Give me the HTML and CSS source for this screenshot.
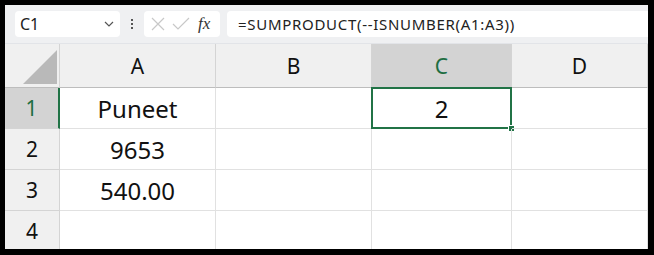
FILE: index.html
```html
<!DOCTYPE html>
<html lang="en">
<head>
    <meta charset="UTF-8">
    <title>Sheet - SUMPRODUCT</title>
    <link rel="stylesheet" href="styles.css">
</head>
<body>

    <div class="frame">

        <!-- Formula bar -->
        <div class="formula-bar">
            <div class="name-box">
                <span>C1</span>
                <svg class="chevron" width="10" height="6" viewBox="0 0 10 6"><path d="M1 1 L5 5 L9 1" fill="none" stroke="#555" stroke-width="1.2"/></svg>
            </div>
            <div class="grip">
                <span></span><span></span><span></span>
            </div>
            <div class="fx-box">
                <svg width="16" height="16" viewBox="0 0 16 16"><path d="M2 2 L14 14 M14 2 L2 14" stroke="#c8c8c8" stroke-width="1.2"/></svg>
                <svg width="18" height="16" viewBox="0 0 18 16"><path d="M1 8 L6 13 L17 2" fill="none" stroke="#c8c8c8" stroke-width="1.2"/></svg>
                <span class="fx">fx</span>
            </div>
            <div class="formula-input">=SUMPRODUCT(--ISNUMBER(A1:A3))</div>
        </div>

        <!-- Grid -->
        <div class="grid">
            <div class="corner">
                <svg width="34" height="34" viewBox="0 0 34 34"><path d="M34 0 L34 34 L0 34 Z" fill="#b9b9b9"/></svg>
            </div>
            <div class="col-head">A</div>
            <div class="col-head">B</div>
            <div class="col-head active">C</div>
            <div class="col-head">D</div>

            <div class="row-head active">1</div>
            <div class="cell">Puneet</div>
            <div class="cell"></div>
            <div class="cell selected">2<span class="handle"></span></div>
            <div class="cell"></div>

            <div class="row-head">2</div>
            <div class="cell">9653</div>
            <div class="cell"></div>
            <div class="cell"></div>
            <div class="cell"></div>

            <div class="row-head">3</div>
            <div class="cell">540.00</div>
            <div class="cell"></div>
            <div class="cell"></div>
            <div class="cell"></div>

            <div class="row-head">4</div>
            <div class="cell"></div>
            <div class="cell"></div>
            <div class="cell"></div>
            <div class="cell"></div>
        </div>

    </div>

</body>
</html>
```

FILE: styles.css
```css
* {
    margin: 0;
    padding: 0;
    box-sizing: border-box;
}
body {
    background-color: #000;
    padding: 5px 6px 6px 5px;
    font-family: "Noto Sans", "Open Sans", sans-serif;
    height: 255px;
    overflow: hidden;
}
.frame {
    width: 643px;
    height: 244px;
    background-color: #fff;
    overflow: hidden;
}
.formula-bar {
    height: 39px;
    background-color: #eff0f2;
    display: flex;
    align-items: center;
    padding: 0 0 0 10px;
    border-bottom: 1px solid #e2e4e8;
}
.name-box {
    width: 105px;
    height: 26px;
    background-color: #fff;
    border-radius: 4px;
    display: flex;
    align-items: center;
    justify-content: space-between;
    padding: 0 6px 0 5px;
    font-size: 16px;
    color: #222;
}
.grip {
    width: 24px;
    display: flex;
    flex-direction: column;
    align-items: center;
    gap: 2px;
}
.grip span {
    width: 2px;
    height: 2px;
    background-color: #555;
}
.fx-box {
    width: 76px;
    height: 26px;
    background-color: #fff;
    border-radius: 4px;
    display: flex;
    align-items: center;
    gap: 6px;
    padding-left: 6px;
}
.fx {
    font-family: "Liberation Serif", serif;
    font-style: italic;
    font-size: 17px;
    color: #333;
    margin-left: 2px;
}
.formula-input {
    flex: 1;
    height: 26px;
    margin-left: 7px;
    background-color: #fff;
    border-radius: 4px 0 0 4px;
    display: flex;
    align-items: center;
    padding-left: 11px;
    font-size: 15px;
    letter-spacing: 0.7px;
    color: #222;
}
.grid {
    display: grid;
    grid-template-columns: 55px 156px 156px 140px 136px;
    grid-template-rows: 44px 41px 41px 41px 41px;
}
.corner {
    background-color: #f0f0f0;
    border-right: 1px solid #d4d4d4;
    border-bottom: 1px solid #bdbdbd;
    display: flex;
    align-items: flex-end;
    justify-content: flex-end;
    padding: 0 2px 3px 0;
}
.col-head {
    background-color: #f0f0f0;
    border-right: 1px solid #d4d4d4;
    border-bottom: 1px solid #bdbdbd;
    display: flex;
    align-items: center;
    justify-content: center;
    font-size: 21px;
    color: #111;
}
.col-head.active {
    background-color: #d3d3d3;
    color: #1e6e42;
}
.row-head {
    background-color: #f0f0f0;
    border-right: 1px solid #d4d4d4;
    border-bottom: 1px solid #d4d4d4;
    display: flex;
    align-items: center;
    justify-content: center;
    font-size: 21px;
    color: #111;
}
.row-head.active {
    background-color: #d3d3d3;
    color: #1e6e42;
    border-right: 2px solid #217346;
}
.cell {
    position: relative;
    border-right: 1px solid #e1e1e1;
    border-bottom: 1px solid #e1e1e1;
    display: flex;
    align-items: center;
    justify-content: center;
    font-size: 24px;
    color: #111;
}
.cell.selected {
    border: 2px solid #217346;
    margin: -1px 0 0 -1px;
}
.handle {
    position: absolute;
    right: -5px;
    bottom: -5px;
    width: 7px;
    height: 7px;
    background-color: #217346;
    border: 1px solid #fff;
}
```
